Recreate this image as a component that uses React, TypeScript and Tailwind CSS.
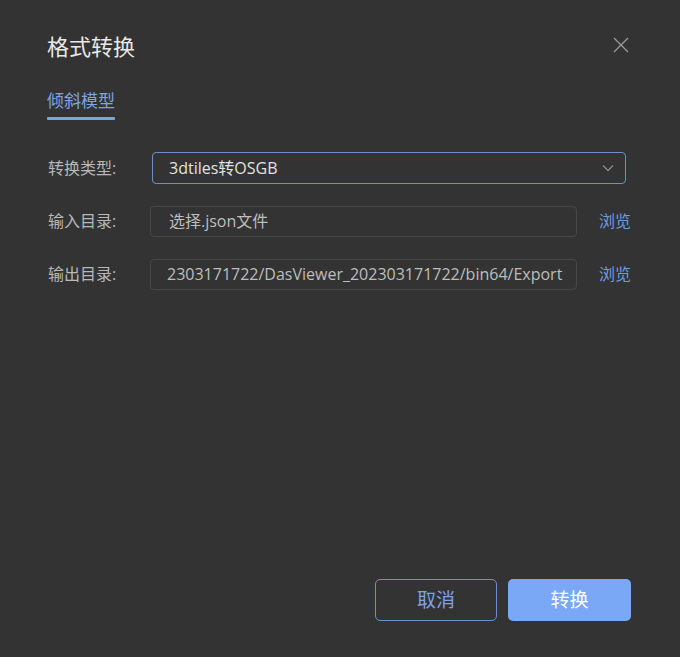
import React from "react";

const font = { fontFamily: '"Open Sans", "Noto Sans CJK SC", sans-serif' };

function Row({ label, children }: { label: string; children: React.ReactNode }) {
  return (
    <div className="flex items-center h-[32px]">
      <div className="w-[103px] shrink-0 text-[16px] text-[#b8b8b8] pl-[1px]">{label}</div>
      {children}
    </div>
  );
}

export default function App() {
  return (
    <div className="w-[680px] h-[657px] bg-[#333333] flex flex-col" style={font}>
      <div className="flex items-center justify-between pl-[47px] pr-[50px] pt-[29px] h-[62px]">
        <div className="text-[22px] text-[#e8e8e8] leading-[30px]">格式转换</div>
        <svg width="18" height="18" viewBox="0 0 18 18" className="mt-[-2px]">
          <path d="M2 2 L16 16 M16 2 L2 16" stroke="#9a9a9a" strokeWidth="1.3" />
        </svg>
      </div>

      <div className="pl-[47px] pt-[27px]">
        <div className="inline-flex flex-col">
          <div className="text-[17px] text-[#7ba3e6] leading-[24px]">倾斜模型</div>
          <div className="h-[3px] bg-[#7ba3e6] mt-[4px] rounded-[1px]" />
        </div>
      </div>

      <div className="flex flex-col gap-[21px] pl-[47px] pt-[32px]">
        <Row label="转换类型:">
          <div className="ml-[2px] w-[474px] h-[32px] border border-[#6d8fcb] rounded-[4px] flex items-center justify-between pl-[16px] pr-[10px]">
            <span className="text-[16px] text-[#e2e2e2]">3dtiles转OSGB</span>
            <svg width="14" height="10" viewBox="0 0 14 10">
              <path d="M2 2.5 L7 7.5 L12 2.5" fill="none" stroke="#8a8a8a" strokeWidth="1.3" />
            </svg>
          </div>
        </Row>
        <Row label="输入目录:">
          <div className="w-[427px] h-[31px] border border-[#474747] rounded-[4px] flex items-center pl-[18px]">
            <span className="text-[16px] text-[#bdbdbd]">选择.json文件</span>
          </div>
          <span className="ml-[22px] text-[16px] text-[#6f9be0]">浏览</span>
        </Row>
        <Row label="输出目录:">
          <div className="w-[427px] h-[31px] border border-[#474747] rounded-[4px] flex items-center overflow-hidden pl-[16px]">
            <span className="text-[16px] text-[#bdbdbd] whitespace-nowrap">
              2303171722/DasViewer_202303171722/bin64/Export
            </span>
          </div>
          <span className="ml-[22px] text-[16px] text-[#6f9be0]">浏览</span>
        </Row>
      </div>

      <div className="flex-1" />

      <div className="flex justify-end gap-[11px] pr-[49px] pb-[36px]">
        <button className="w-[122px] h-[42px] border border-[#6d8fcb] rounded-[5px] text-[19px] text-[#7ba3e6]">
          取消
        </button>
        <button className="w-[123px] h-[42px] bg-[#7aa8f7] rounded-[5px] text-[19px] text-white">
          转换
        </button>
      </div>
    </div>
  );
}
